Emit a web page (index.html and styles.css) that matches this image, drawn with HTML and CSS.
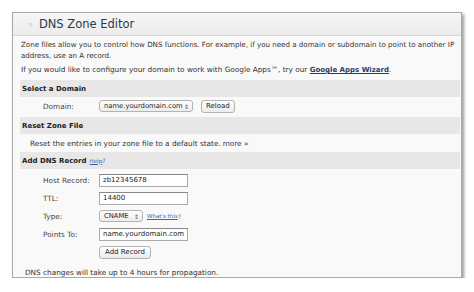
FILE: index.html
```html
<!DOCTYPE html>
<html>
<head>
<meta charset="utf-8">
<link rel="stylesheet" href="styles.css">
</head>
<body>
<div class="card">
  <div class="title"><span class="bullet">»</span><span class="title-text">DNS Zone Editor</span></div>
  <div class="content">
    <p class="intro">Zone files allow you to control how DNS functions. For example, if you need a domain or subdomain to point to another IP<br>address, use an A record.</p>
    <p class="intro2">If you would like to configure your domain to work with Google Apps™, try our <a class="wizard" href="#">Google Apps Wizard</a>.</p>
    <div class="section-head">Select a Domain</div>
    <div class="row domain-row">
      <span class="label">Domain:</span>
      <span class="select domain-select">name.yourdomain.com<span class="arrows">⇕</span></span>
      <span class="button">Reload</span>
    </div>
    <div class="section-head">Reset Zone File</div>
    <div class="row reset-row">Reset the entries in your zone file to a default state. <a class="more" href="#">more »</a></div>
    <div class="section-head">Add DNS Record <a class="small-link" href="#">Help</a><span class="q">?</span></div>
    <div class="form">
      <div class="frow"><span class="label">Host Record:</span><span class="input">zb12345678</span></div>
      <div class="frow"><span class="label">TTL:</span><span class="input">14400</span></div>
      <div class="frow"><span class="label">Type:</span><span class="select type-select">CNAME<span class="arrows">⇕</span></span><a class="small-link whats" href="#">What's this</a><span class="q">?</span></div>
      <div class="frow"><span class="label">Points To:</span><span class="input">name.yourdomain.com</span></div>
      <div class="frow"><span class="label"></span><span class="button add">Add Record</span></div>
    </div>
    <p class="note">DNS changes will take up to 4 hours for propagation.</p>
  </div>
</div>
</body>
</html>
```

FILE: styles.css
```css
html, body {
  margin: 0;
  padding: 0;
  background: #ffffff;
}
body {
  padding: 12px 0 0 12px;
  font-family: "DejaVu Sans", Verdana, sans-serif;
  font-size: 7.3px;
  color: #333;
}
.card {
  width: 450px;
  height: 266px;
  border: 1px solid #a9a9a9;
  background: #f9f9f9;
  box-shadow: 2px 2px 3px rgba(0,0,0,0.4);
  box-sizing: border-box;
  display: flex;
  flex-direction: column;
}
.title {
  height: 23px;
  flex: none;
  display: flex;
  align-items: center;
  padding-left: 15px;
  background: linear-gradient(#f6f6f6, #ececec);
  border-bottom: 1px solid #d6d6d6;
  box-sizing: border-box;
}
.bullet {
  color: #c4c4c4;
  font-size: 8px;
  margin-right: 6px;
}
.title-text {
  font-size: 11.5px;
  color: #2a3a50;
}
.content {
  padding: 3px 0 0 7px;
}
.intro {
  margin: 0;
  line-height: 11px;
  padding-left: 1px;
  font-size: 7.1px;
  white-space: nowrap;
}
.intro2 {
  margin: 3px 0 4px;
  line-height: 11px;
  padding-left: 1px;
}
.wizard {
  color: #1d3e6e;
  font-weight: bold;
  font-size: 7px;
}
.section-head {
  background: #e7e7e7;
  height: 17px;
  display: flex;
  align-items: center;
  padding-left: 2px;
  font-weight: bold;
  font-size: 7px;
  color: #222;
  margin-right: 1px;
}
.row {
  display: flex;
  align-items: center;
}
.domain-row {
  height: 20px;
  padding-bottom: 2px;
  box-sizing: border-box;
}
.label {
  width: 56px;
  padding-left: 23px;
  flex: none;
  color: #444;
}
.select {
  height: 12px;
  border: 1px solid #b3b3b3;
  border-radius: 3px;
  background: linear-gradient(#ffffff, #ececec);
  display: flex;
  align-items: center;
  justify-content: space-between;
  padding: 0 3px 0 4px;
  box-sizing: border-box;
  color: #222;
  font-size: 6.8px;
}
.domain-select {
  width: 94px;
}
.type-select {
  width: 44px;
}
.arrows {
  font-size: 6px;
  color: #555;
}
.button {
  height: 13px;
  border: 1px solid #b3b3b3;
  border-radius: 3px;
  background: linear-gradient(#ffffff, #ececec);
  display: inline-flex;
  align-items: center;
  padding: 0 4px;
  box-sizing: border-box;
  color: #222;
  margin-left: 8px;
  font-size: 7px;
}
.button.add {
  margin-left: 0;
  padding: 0 5px;
}
.reset-row {
  height: 18px;
  padding-left: 10px;
}
.more {
  color: #1d3e6e;
  text-decoration: none;
  margin-left: 2px;
}
.small-link {
  font-weight: normal;
  font-size: 5.5px;
  color: #3a66a8;
  margin-left: 3px;
}
.q {
  font-weight: normal;
  font-size: 6px;
  color: #3a66a8;
}
.whats {
  margin-left: 4px;
}
.form {
  padding-top: 2px;
}
.frow {
  height: 18px;
  display: flex;
  align-items: center;
}
.input {
  width: 89px;
  height: 13px;
  border: 1px solid #aaa;
  border-top-color: #888;
  background: #fff;
  display: flex;
  align-items: center;
  padding-left: 3px;
  box-sizing: border-box;
  color: #222;
  font-size: 7px;
}
.note {
  margin: 6px 0 0;
  padding-left: 5px;
  line-height: 11px;
}
```
